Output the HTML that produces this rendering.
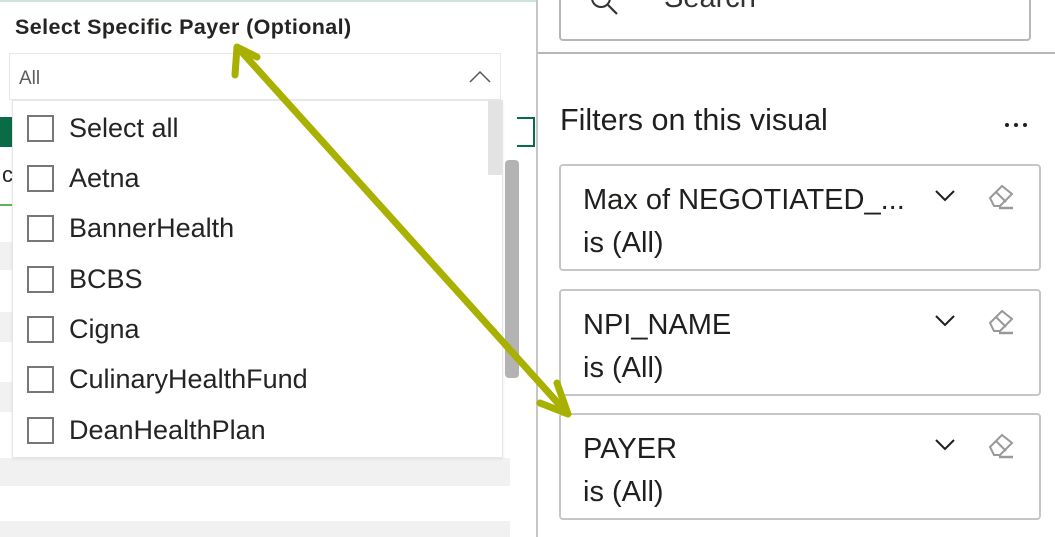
<!DOCTYPE html>
<html><head><style>
*{margin:0;padding:0;box-sizing:border-box}
body{width:1055px;height:537px;overflow:hidden;background:#fff;position:relative;font-family:"Segoe UI","Liberation Sans",sans-serif;color:#252423}
.a{position:absolute}
.card{position:absolute;left:559px;width:482px;height:107px;border:2px solid #c8c6c4;border-radius:4px;background:#fff}
.card .t{position:absolute;left:22px;top:14px;font-size:29px;line-height:40px;color:#201f1e;white-space:nowrap}
.card .s{position:absolute;left:22px;top:57px;font-size:29px;line-height:40px;color:#201f1e}
.card svg{position:absolute}
.item{position:absolute;left:27px;height:40px;font-size:27px;line-height:40px}
.item i{position:absolute;left:0;top:7px;width:27px;height:27px;border:2px solid #777}
.item span{position:absolute;left:42px;white-space:nowrap}
</style></head><body>
<div class="a" style="left:0;top:0;width:536px;height:2px;background:#cfe2dc"></div>
<div class="a" style="left:536px;top:0;width:2px;height:537px;background:#c8c6c4"></div>
<div class="a" style="left:0;top:117px;width:12px;height:30px;background:#0a6b47"></div>
<div class="a" style="left:517px;top:117px;width:18px;height:30px;border:2px solid #0a6b47;border-left:none"></div>
<div class="a" style="left:2px;top:162px;font-size:22px">c</div>
<div class="a" style="left:0;top:204px;width:12px;height:2px;background:#5fb35f"></div>
<div class="a" style="left:0;top:242px;width:12px;height:28px;background:#f1f1f1"></div>
<div class="a" style="left:0;top:312px;width:12px;height:30px;background:#f1f1f1"></div>
<div class="a" style="left:0;top:382px;width:12px;height:30px;background:#f1f1f1"></div>
<div class="a" style="left:0;top:458px;width:510px;height:28px;background:#f1f1f1"></div>
<div class="a" style="left:0;top:521px;width:510px;height:16px;background:#f1f1f1"></div>
<div class="a" style="left:505px;top:160px;width:14px;height:218px;background:#b3b3b3;border-radius:4px"></div>
<div class="a" style="left:15px;top:15px;font-size:21.5px;font-weight:600;letter-spacing:0.4px;color:#252423;white-space:nowrap">Select Specific Payer (Optional)</div>
<div class="a" style="left:9px;top:53px;width:492px;height:47px;border:1px solid #e8e8e8;background:#fff"></div>
<div class="a" style="left:19px;top:68px;font-size:19px;color:#605e5c">All</div>
<svg class="a" style="left:468px;top:68px" width="24" height="16"><path d="M2 14 L12 4 L22 14" fill="none" stroke="#555" stroke-width="1.5"/></svg>
<div class="a" style="left:12px;top:100px;width:491px;height:358px;background:#fff;border:1px solid #e6e6e6;box-shadow:0 1px 3px rgba(0,0,0,.08)"></div>
<div class="a" style="left:488px;top:101px;width:14px;height:74px;background:#e3e3e3"></div>
<div class="item" style="top:108px"><i></i><span>Select all</span></div>
<div class="item" style="top:158px"><i></i><span>Aetna</span></div>
<div class="item" style="top:208px"><i></i><span>BannerHealth</span></div>
<div class="item" style="top:259px"><i></i><span>BCBS</span></div>
<div class="item" style="top:309px"><i></i><span>Cigna</span></div>
<div class="item" style="top:359px"><i></i><span>CulinaryHealthFund</span></div>
<div class="item" style="top:410px"><i></i><span>DeanHealthPlan</span></div>
<div class="a" style="left:559px;top:-10px;width:472px;height:51px;border:2px solid #b9b7b5;border-radius:4px"></div>
<svg class="a" style="left:590px;top:-6px" width="36" height="24"><circle cx="11" cy="4" r="9" fill="none" stroke="#333" stroke-width="2"/><path d="M18 11 L27 20" stroke="#333" stroke-width="2.2"/></svg>
<div class="a" style="left:664px;top:-18px;font-size:29px;color:#333">Search</div>
<div class="a" style="left:538px;top:52px;width:517px;height:2px;background:#b9b7b5"></div>
<div class="a" style="left:560px;top:103px;font-size:30.5px;color:#201f1e;white-space:nowrap">Filters on this visual</div>
<svg class="a" style="left:1003px;top:120px" width="28" height="10"><circle cx="4" cy="5" r="2" fill="#201f1e"/><circle cx="13" cy="5" r="2" fill="#201f1e"/><circle cx="22" cy="5" r="2" fill="#201f1e"/></svg>

<div class="card" style="top:164px"><div class="t">Max of NEGOTIATED_...</div><div class="s">is (All)</div>
<svg style="left:372px;top:22px" width="26" height="16"><path d="M3 3 L12 12 L21 3" fill="none" stroke="#201f1e" stroke-width="2"/></svg>
<svg style="left:425px;top:16px" width="32" height="30"><path d="M4 16 L16 4 L26 12 L14 24 L8 24 Z M10 10 L20 20" fill="none" stroke="#999" stroke-width="2"/><path d="M13 26 L27 26" stroke="#999" stroke-width="2.5"/></svg></div>
<div class="card" style="top:289px"><div class="t">NPI_NAME</div><div class="s">is (All)</div>
<svg style="left:372px;top:22px" width="26" height="16"><path d="M3 3 L12 12 L21 3" fill="none" stroke="#201f1e" stroke-width="2"/></svg>
<svg style="left:425px;top:16px" width="32" height="30"><path d="M4 16 L16 4 L26 12 L14 24 L8 24 Z M10 10 L20 20" fill="none" stroke="#999" stroke-width="2"/><path d="M13 26 L27 26" stroke="#999" stroke-width="2.5"/></svg></div>
<div class="card" style="top:413px"><div class="t">PAYER</div><div class="s">is (All)</div>
<svg style="left:372px;top:22px" width="26" height="16"><path d="M3 3 L12 12 L21 3" fill="none" stroke="#201f1e" stroke-width="2"/></svg>
<svg style="left:425px;top:16px" width="32" height="30"><path d="M4 16 L16 4 L26 12 L14 24 L8 24 Z M10 10 L20 20" fill="none" stroke="#999" stroke-width="2"/><path d="M13 26 L27 26" stroke="#999" stroke-width="2.5"/></svg></div>
<svg class="a" style="left:0;top:0" width="1055" height="537">
<g stroke="#a8b000" stroke-width="7" fill="none" stroke-linecap="round" stroke-linejoin="round">
<path d="M240 50 L566 412"/>
<path d="M235 75 L237 47 L257 57"/>
<path d="M540 403 L568 414 L557 383"/>
</g></svg>
</body></html>
